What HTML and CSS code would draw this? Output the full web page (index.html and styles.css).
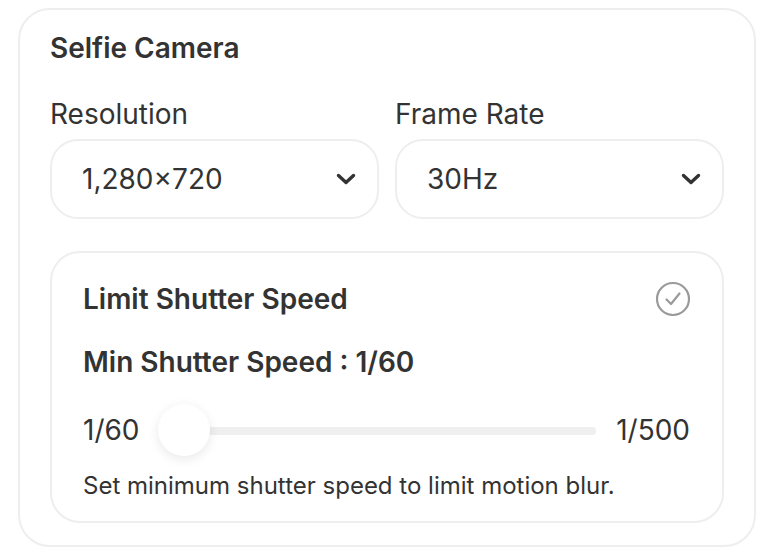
FILE: index.html
```html
<!DOCTYPE html>
<html lang="en">
<head>
<meta charset="utf-8">
<title>Selfie Camera</title>
<link rel="stylesheet" href="styles.css">
</head>
<body>
<section class="card">
  <h2 class="card-title">Selfie Camera</h2>
  <div class="fields">
    <div class="field">
      <div class="field-label">Resolution</div>
      <div class="select">
        <span class="select-value">1,280×720</span>
        <svg class="chevron" width="20" height="12" viewBox="0 0 20 12"><path d="M2.5 2.5 L10 9.5 L17.5 2.5" fill="none" stroke="#333" stroke-width="3.4" stroke-linecap="round" stroke-linejoin="round"/></svg>
      </div>
    </div>
    <div class="field">
      <div class="field-label">Frame Rate</div>
      <div class="select">
        <span class="select-value">30Hz</span>
        <svg class="chevron" width="20" height="12" viewBox="0 0 20 12"><path d="M2.5 2.5 L10 9.5 L17.5 2.5" fill="none" stroke="#333" stroke-width="3.4" stroke-linecap="round" stroke-linejoin="round"/></svg>
      </div>
    </div>
  </div>
  <div class="panel">
    <div class="panel-head">
      <span class="panel-title">Limit Shutter Speed</span>
      <svg class="check" width="36" height="36" viewBox="0 0 36 36"><circle cx="18" cy="18" r="16" fill="none" stroke="#9a9a9a" stroke-width="2.2"/><path d="M11.5 18.5 L16 23 L24.5 12.5" fill="none" stroke="#9a9a9a" stroke-width="2.2" stroke-linecap="round" stroke-linejoin="round"/></svg>
    </div>
    <div class="panel-sub">Min Shutter Speed : 1/60</div>
    <div class="slider-row">
      <span class="slider-label">1/60</span>
      <div class="slider">
        <div class="track"></div>
        <div class="thumb"></div>
      </div>
      <span class="slider-label">1/500</span>
    </div>
    <p class="hint">Set minimum shutter speed to limit motion blur.</p>
  </div>
</section>
</body>
</html>
```
FILE: styles.css
```css
html, body {
  margin: 0;
  padding: 0;
  background: #ffffff;
}
body {
  font-family: Inter, "Noto Sans", "Liberation Sans", sans-serif;
  color: #333333;
}
.card {
  margin: 8px 18px 11px 18px;
  height: 539px;
  box-sizing: border-box;
  border: 2px solid #eeeeee;
  border-radius: 32px;
  padding: 21px 30px 0 30px;
}
.card-title {
  margin: 0;
  font-size: 28px;
  font-weight: 600;
  line-height: 34px;
  color: #333;
}
.fields {
  display: grid;
  grid-template-columns: 1fr 1fr;
  column-gap: 16px;
  margin-top: 32px;
}
.field-label {
  font-size: 28px;
  line-height: 34px;
  margin-bottom: 8px;
}
.select {
  height: 80px;
  box-sizing: border-box;
  border: 2px solid #eeeeee;
  border-radius: 28px;
  display: flex;
  align-items: center;
  justify-content: space-between;
  padding: 0 21px 0 30px;
}
.select-value {
  font-size: 28px;
}
.chevron {
  display: block;
}
.panel {
  margin-top: 32px;
  height: 272px;
  box-sizing: border-box;
  border: 2px solid #eeeeee;
  border-radius: 30px;
  padding: 28px 32px 0 31px;
}
.panel-head {
  display: flex;
  align-items: center;
  justify-content: space-between;
  height: 36px;
}
.panel-title {
  font-size: 28px;
  font-weight: 600;
  line-height: 34px;
}
.check {
  display: block;
  margin-right: -1px;
}
.panel-sub {
  margin-top: 28px;
  font-size: 28px;
  font-weight: 600;
  line-height: 34px;
}
.slider-row {
  display: flex;
  align-items: center;
  margin-top: 24px;
  height: 54px;
}
.slider-label {
  font-size: 28px;
  line-height: 34px;
}
.slider {
  flex: 1;
  position: relative;
  height: 54px;
  margin: 0 20px 0 18px;
}
.track {
  position: absolute;
  left: 0;
  right: 0;
  top: 24px;
  height: 8px;
  border-radius: 4px;
  background: #efefef;
}
.thumb {
  position: absolute;
  left: 0;
  top: 1px;
  width: 52px;
  height: 52px;
  border-radius: 50%;
  background: #ffffff;
  box-shadow: 0 3px 12px rgba(0,0,0,0.09);
}
.hint {
  margin: 14px 0 0 0;
  font-size: 24px;
  line-height: 30px;
}
```
